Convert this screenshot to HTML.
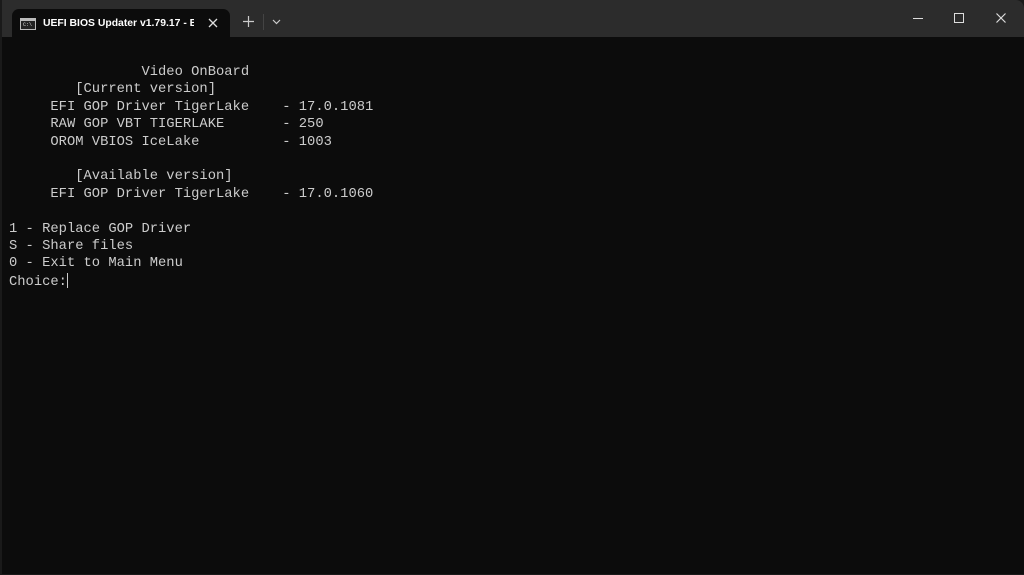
<!DOCTYPE html>
<html><head><meta charset="utf-8"><style>
html,body{margin:0;padding:0;width:1024px;height:575px;overflow:hidden;background:#1a1a1a;}
.win{position:absolute;left:2px;top:0;width:1022px;height:574px;background:#0c0c0c;border-top-right-radius:8px;overflow:hidden;}
.bar{position:absolute;left:0;top:0;width:100%;height:37px;background:#2c2c2c;}
.tab{position:absolute;left:10px;top:9px;width:218px;height:29px;background:#0c0c0c;border-radius:7px 7px 0 0;}
.tab .t{position:absolute;left:31px;top:9px;font:bold 10.4px "Liberation Sans",sans-serif;color:#fff;white-space:nowrap;width:151px;overflow:hidden;}
.ico{position:absolute;left:8px;top:9px;width:14px;height:10px;border:1px solid #bbb;background:#222;}
.ico:before{content:"";position:absolute;left:0;top:0;right:0;height:2px;background:#bbb;}
.ico span{position:absolute;left:2px;top:3px;font:5px "Liberation Mono",monospace;color:#ddd;}
pre{position:absolute;left:9px;top:64px;margin:0;font:13.8px/17.4px "Liberation Mono",monospace;color:#cccccc;}
.cur{display:inline-block;width:1px;height:15px;background:#ccc;vertical-align:-3px;}
</style></head><body>
<div class="win">
<div class="bar">
<div class="tab"><div class="ico"><span>C:\</span></div><div class="t">UEFI BIOS Updater v1.79.17 - E</div>
<svg style="position:absolute;left:196px;top:9px" width="10" height="10"><path d="M1 1L9 9M9 1L1 9" stroke="#ddd" stroke-width="1.3"/></svg></div>
<svg style="position:absolute;left:241px;top:16px" width="11" height="11"><path d="M5.5 0V11M0 5.5H11" stroke="#ccc" stroke-width="1.2"/></svg>
<div style="position:absolute;left:261px;top:14px;width:1px;height:16px;background:#444"></div>
<svg style="position:absolute;left:270px;top:19px" width="9" height="6"><path d="M1 1L4.5 4.5L8 1" stroke="#ccc" stroke-width="1.2" fill="none"/></svg>
<div style="position:absolute;left:911px;top:18px;width:10px;height:1px;background:#ddd"></div>
<div style="position:absolute;left:952px;top:13px;width:8px;height:8px;border:1px solid #ddd"></div>
<svg style="position:absolute;left:994px;top:13px" width="10" height="10"><path d="M0.5 0.5L9.5 9.5M9.5 0.5L0.5 9.5" stroke="#ddd" stroke-width="1.2"/></svg>
</div>
</div>
<pre>                Video OnBoard
        [Current version]
     EFI GOP Driver TigerLake    - 17.0.1081
     RAW GOP VBT TIGERLAKE       - 250
     OROM VBIOS IceLake          - 1003

        [Available version]
     EFI GOP Driver TigerLake    - 17.0.1060

1 - Replace GOP Driver
S - Share files
0 - Exit to Main Menu
Choice:<span class="cur"></span></pre>
</body></html>
